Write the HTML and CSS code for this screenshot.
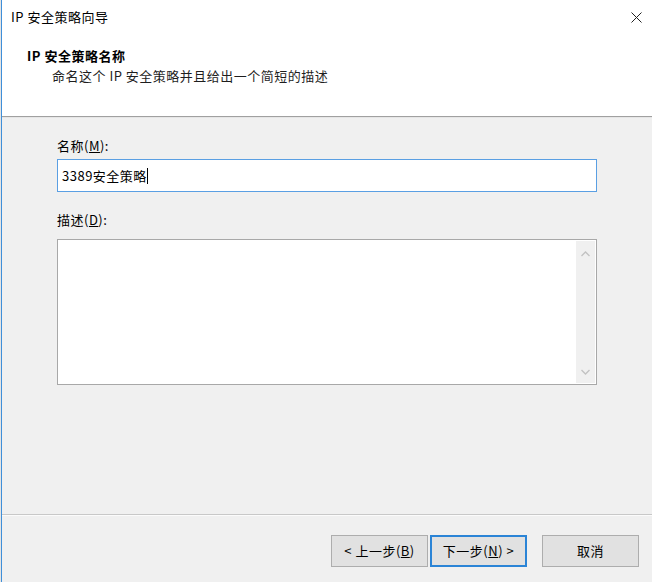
FILE: index.html
```html
<!DOCTYPE html>
<html lang="zh-CN">
<head>
    <meta charset="UTF-8">
    <title>IP 安全策略向导</title>
    <link rel="stylesheet" href="styles.css">
</head>
<body>
    <div class="window">
        <div class="titlebar">
            <span class="title">IP 安全策略向导</span>
            <svg class="close" width="11" height="11" viewBox="0 0 11 11">
                <path d="M0.5 0.5 L10.5 10.5 M10.5 0.5 L0.5 10.5" stroke="#222" stroke-width="1" fill="none"/>
            </svg>
        </div>

        <div class="header">
            <div class="header-title">IP 安全策略名称</div>
            <div class="header-sub">命名这个 IP 安全策略并且给出一个简短的描述</div>
        </div>

        <div class="content">
            <div class="label">名称(<u>M</u>):</div>
            <div class="edit focused">3389安全策略<span class="caret"></span></div>

            <div class="label label-desc">描述(<u>D</u>):</div>
            <div class="memo">
                <div class="memo-text"></div>
                <div class="scrollbar">
                    <svg width="9" height="6" viewBox="0 0 9 6">
                        <path d="M0.5 5 L4.5 1 L8.5 5" stroke="#c2c2c2" stroke-width="1.3" fill="none"/>
                    </svg>
                    <svg width="9" height="6" viewBox="0 0 9 6">
                        <path d="M0.5 1 L4.5 5 L8.5 1" stroke="#c2c2c2" stroke-width="1.3" fill="none"/>
                    </svg>
                </div>
            </div>
        </div>

        <div class="footer">
            <button class="btn">&lt; 上一步(<u>B</u>)</button>
            <button class="btn btn-default">下一步(<u>N</u>) &gt;</button>
            <button class="btn btn-cancel">取消</button>
        </div>
    </div>
</body>
</html>
```

FILE: styles.css
```css
* {
    margin: 0;
    padding: 0;
    box-sizing: border-box;
}

body {
    font-family: "Segoe UI", "Noto Sans CJK SC", "Noto Sans", sans-serif;
    font-size: 13px;
    letter-spacing: 0.5px;
    color: #000;
    background: #e4e4e4;
    width: 652px;
    height: 582px;
    overflow: hidden;
}

.window {
    margin-left: 1px;
    border-left: 1px solid #3f8fd9;
    height: 582px;
    display: flex;
    flex-direction: column;
    background: #f0f0f0;
}

.titlebar {
    background: white;
    height: 34px;
    padding: 0 10px 0 9px;
    display: flex;
    justify-content: space-between;
    align-items: center;
}

.title {
    line-height: 20px;
}

.close {
    display: block;
}

.header {
    background: white;
    height: 83px;
    padding: 12px 0 0 25px;
    border-bottom: 1px solid #a0a0a0;
    box-shadow: 0 1px 0 #e6e6e6;
}

.header-title {
    font-weight: bold;
    line-height: 20px;
}

.header-sub {
    line-height: 20px;
    padding-left: 25px;
    color: #1e1e1e;
}

.content {
    flex: 1;
    padding: 19px 55px 0 55px;
    border-bottom: 1px solid #c8c8c8;
    box-shadow: 0 1px 0 #fbfbfb;
}

.label {
    line-height: 20px;
}

.label-desc {
    margin-top: 18px;
}

.edit {
    margin-top: 3px;
    height: 33px;
    background: white;
    border: 1px solid #7a7a7a;
    padding: 0 4px;
    display: flex;
    align-items: center;
    line-height: 20px;
}

.edit.focused {
    border-color: #5a9fe3;
}

.caret {
    display: inline-block;
    width: 1px;
    height: 16px;
    background: #000;
    margin-left: 0;
}

.memo {
    margin-top: 9px;
    height: 146px;
    background: white;
    border: 1px solid #a8a8a8;
    display: flex;
}

.memo-text {
    flex: 1;
}

.scrollbar {
    width: 19px;
    margin: 1px 1px 1px 0;
    background: #f0f0f0;
    display: flex;
    flex-direction: column;
    justify-content: space-between;
    align-items: center;
    padding: 10px 0 8px;
}

.scrollbar svg {
    display: block;
}

.footer {
    height: 67px;
    display: flex;
    justify-content: flex-end;
    padding: 20px 13px 0 0;
}

.btn {
    font-family: inherit;
    font-size: 13px;
    letter-spacing: 0.5px;
    width: 97px;
    height: 32px;
    background: #e1e1e1;
    border: 1px solid #adadad;
    color: #000;
    line-height: 20px;
}

.btn + .btn {
    margin-left: 2px;
}

.btn-default {
    border: 2px solid #2b84d6;
}

.btn-cancel {
    margin-left: 15px !important;
}
```
